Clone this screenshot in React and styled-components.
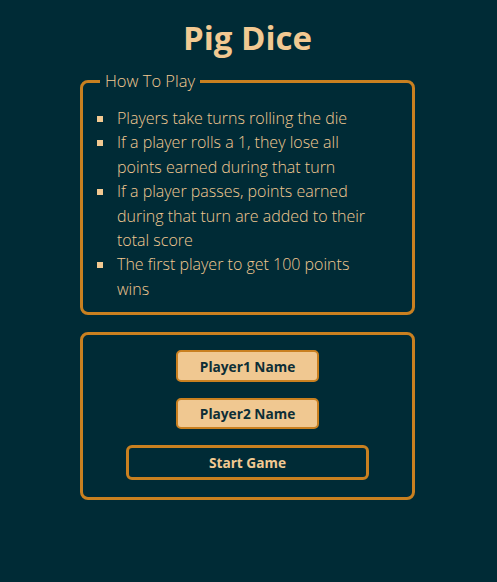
import React from 'react'
import styled, { createGlobalStyle } from 'styled-components'

const GlobalStyle = createGlobalStyle`
    html, body {
        margin: 0;
        padding: 0;
        background-color: #002b36;
        font-family: "Open Sans", "Noto Sans", sans-serif;
        color: #f2c992;
    }
`

const Page = styled.div`
    min-height: 582px;
    display: flex;
    flex-direction: column;
    align-items: center;
    padding: 14px 2px 0 0;
    box-sizing: border-box;
`

const Title = styled.h1`
    margin: 0 0 8px 0;
    font-size: 33px;
    font-weight: 700;
    line-height: 48px;
    color: #f2c992;
`

const Rules = styled.fieldset`
    width: 335px;
    box-sizing: border-box;
    margin: 0;
    padding: 14px 10px 11px 14px;
    border: 3px solid #c98020;
    border-radius: 8px;
`

const Legend = styled.legend`
    padding: 0 5px;
    margin-left: 3px;
    font-size: 16.5px;
    font-weight: 300;
    line-height: 22px;
`

const List = styled.ul`
    margin: 0;
    padding: 0;
    list-style: none;
    font-size: 16px;
    font-weight: 300;
    line-height: 24.4px;
`

const Rule = styled.li`
    display: flex;
    padding-right: 24px;

    &::before {
        content: '';
        flex-shrink: 0;
        width: 6px;
        height: 6px;
        margin: 10px 14px 0 0;
        background-color: #f2c992;
    }
`

const Setup = styled.form`
    width: 335px;
    box-sizing: border-box;
    margin-top: 17px;
    padding: 15px 0 17px 0;
    border: 3px solid #c98020;
    border-radius: 8px;
    display: flex;
    flex-direction: column;
    align-items: center;
    gap: 16px;
`

const NameInput = styled.input`
    width: 143px;
    height: 31.5px;
    box-sizing: border-box;
    border: 2px solid #c98020;
    border-radius: 5px;
    background-color: #f0c891;
    font-family: "Open Sans", sans-serif;
    font-size: 13.7px;
    font-weight: 700;
    text-align: center;
    color: #002b36;
    outline: none;

    &::placeholder {
        color: #0d2e36;
        opacity: 1;
    }
`

const StartButton = styled.button`
    width: 243px;
    height: 35px;
    box-sizing: border-box;
    border: 3px solid #c98020;
    border-radius: 6px;
    background: transparent;
    color: #f2c992;
    font-family: "Open Sans", sans-serif;
    font-size: 13.7px;
    font-weight: 700;
    cursor: pointer;
`

const rules = [
    'Players take turns rolling the die',
    'If a player rolls a 1, they lose all points earned during that turn',
    'If a player passes, points earned during that turn are added to their total score',
    'The first player to get 100 points wins',
]

const App = () => {
    return (
        <>
            <GlobalStyle />
            <Page>
                <Title>Pig Dice</Title>
                <Rules>
                    <Legend>How To Play</Legend>
                    <List>
                        {rules.map((rule) => (
                            <Rule key={rule}>{rule}</Rule>
                        ))}
                    </List>
                </Rules>
                <Setup onSubmit={(e) => e.preventDefault()}>
                    <NameInput placeholder="Player1 Name" />
                    <NameInput placeholder="Player2 Name" />
                    <StartButton type="submit">Start Game</StartButton>
                </Setup>
            </Page>
        </>
    )
}

export default App
